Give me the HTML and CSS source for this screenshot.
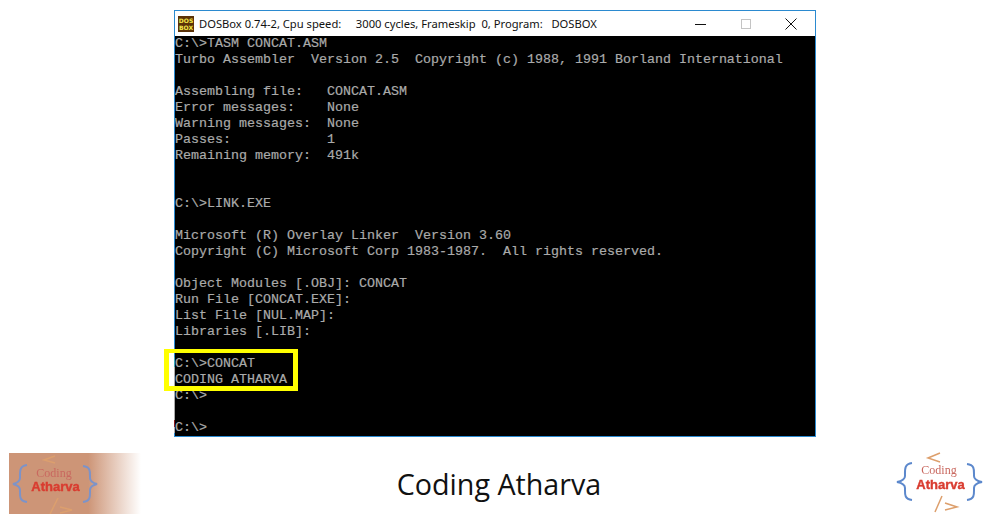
FILE: index.html
```html
<!DOCTYPE html>
<html lang="en">
<head>
    <meta charset="UTF-8">
    <meta name="viewport" content="width=device-width, initial-scale=1.0">
    <title>Coding Atharva - DOSBox</title>
    <link rel="stylesheet" href="styles.css">
</head>
<body>
    <div class="stage">
        <div class="window">
            <div class="titlebar">
                <div class="app-icon"><span>DOS</span><span>BOX</span></div>
                <div class="title">DOSBox 0.74-2, Cpu speed:     3000 cycles, Frameskip  0, Program:   DOSBOX</div>
                <div class="win-controls">
                    <svg width="12" height="12" viewBox="0 0 12 12"><path d="M0 6.500H11" stroke="#111" fill="none"/></svg>
                    <svg width="12" height="12" viewBox="0 0 12 12"><rect x="1.500" y="1.500" width="9" height="9" stroke="#c4c4c4" fill="none"/></svg>
                    <svg width="12" height="12" viewBox="0 0 12 12"><path d="M.5 .5L11.500 11.500M11.500 .5L.5 11.500" stroke="#111" fill="none"/></svg>
                </div>
            </div>
            <pre class="terminal">C:\&gt;TASM CONCAT.ASM
Turbo Assembler  Version 2.5  Copyright (c) 1988, 1991 Borland International

Assembling file:   CONCAT.ASM
Error messages:    None
Warning messages:  None
Passes:            1
Remaining memory:  491k


C:\&gt;LINK.EXE

Microsoft (R) Overlay Linker  Version 3.60
Copyright (C) Microsoft Corp 1983-1987.  All rights reserved.

Object Modules [.OBJ]: CONCAT
Run File [CONCAT.EXE]:
List File [NUL.MAP]:
Libraries [.LIB]:

C:\&gt;CONCAT
CODING ATHARVA
C:\&gt;

C:\&gt;</pre>
            <div class="edge"></div>
            <div class="highlight"></div>
        </div>
    </div>

    <div class="footer">
        <div class="logo-left">
            <svg class="logo" width="96" height="61" viewBox="0 0 96 61">
                <path d="M18 12C10 13 11 19 11 25C11 28 8 30 4 31C8 32 11 34 11 37C11 43 10 48 18 49" stroke="#7c93c9" stroke-width="2" fill="none"/>
                <path d="M74 13C82 14 81 19 81 25C81 28 84 30 88 31C84 32 81 34 81 37C81 43 82 48 74 49" stroke="#7c93c9" stroke-width="2" fill="none"/>
                <path d="M46 3L35 7L46 10" stroke="#dc9f6e" stroke-width="1.500" fill="none"/>
                <path d="M41 61L49 45M51 54L63 57L51 60" stroke="#dc9f6e" stroke-width="1.500" fill="none"/>
                <text class="logo-small" x="45" y="24" fill="#c9685f">Coding</text>
                <text class="logo-big" x="46.500" y="38" fill="#d93c30">Atharva</text>
            </svg>
        </div>
        <div class="channel">Coding Atharva</div>
        <svg class="logo" width="95" height="67" viewBox="0 0 95 67">
            <path d="M22 13C14 14 15 20 15 26C15 29 12 31 7 32C12 33 15 35 15 38C15 44 14 49 22 50" stroke="#5c88cc" stroke-width="2" fill="none"/>
            <path d="M77 14C85 15 84 20 84 26C84 29 87 31 92 32C87 33 84 35 84 38C84 44 85 49 77 50" stroke="#5c88cc" stroke-width="2" fill="none"/>
            <path d="M50 3L38 8L50 12" stroke="#dd9f6c" stroke-width="1.500" fill="none"/>
            <path d="M45 62L52 46M55 53L67 57L55 60" stroke="#dd9f6c" stroke-width="1.500" fill="none"/>
            <text class="logo-small" x="49" y="24" fill="#c9685f">Coding</text>
            <text class="logo-big" x="50.500" y="39" fill="#d93c30">Atharva</text>
        </svg>
    </div>
</body>
</html>
```

FILE: styles.css
```css
body {
    margin: 0;
    background: #ffffff;
    font-family: "Open Sans", sans-serif;
    overflow: hidden;
}

.stage {
    display: flex;
    justify-content: center;
    padding-top: 10px;
}

.window {
    position: relative;
    width: 640px;
    border: 1px solid #2b8ad0;
}

.titlebar {
    display: flex;
    align-items: center;
    height: 25px;
    padding-left: 3px;
    background: #ffffff;
}

.app-icon {
    display: flex;
    flex-direction: column;
    justify-content: center;
    align-items: center;
    width: 16px;
    height: 16px;
    background: #5b3208;
    color: #f4e94a;
    font-family: "DejaVu Sans", sans-serif;
    font-size: 6px;
    font-weight: bold;
    line-height: 7px;
}

.title {
    flex: 1;
    margin-left: 5px;
    font-family: "Noto Sans", sans-serif;
    font-size: 11.200px;
    color: #111111;
    white-space: pre;
}

.win-controls {
    display: flex;
    gap: 33px;
    padding-right: 18px;
}

.terminal {
    margin: 0;
    height: 400px;
    background: #000000;
    color: #aaaaaa;
    font-family: "Liberation Mono", monospace;
    font-size: 13.333px;
    line-height: 16px;
    -webkit-text-stroke: 0.2px #aaaaaa;
}

/* recolored bit of the window's left border, from the capture */
.edge {
    position: absolute;
    left: -1px;
    top: 346px;
    width: 1px;
    height: 76px;
    background: linear-gradient(180deg, #3aa7b5 0 10px, #aaaaaa 10px 63px, #8a1a1a 63px 70px, #aaaaaa 70px);
}

/* yellow box drawn over the screenshot */
.highlight {
    position: absolute;
    left: -11px;
    top: 338px;
    width: 124px;
    height: 33px;
    border: 5px solid #ffff00;
    border-width: 4px 5px 5px 5px;
}

.footer {
    display: flex;
    align-items: center;
    justify-content: space-between;
    height: 67px;
    margin-top: 13px;
    padding: 0 5px 0 9px;
}

.logo-left {
    width: 132px;
    height: 61px;
    background: linear-gradient(90deg, #cd9577 0%, #cd9577 60%, #ffffff 100%);
}

.logo {
    display: block;
    filter: blur(0.4px);
}

.logo-small {
    font-family: "Liberation Serif", serif;
    font-size: 12px;
    text-anchor: middle;
}

.logo-big {
    font-family: "Liberation Sans", sans-serif;
    font-size: 13px;
    font-weight: bold;
    text-anchor: middle;
    stroke: #d93c30;
    stroke-width: 0.4px;
}

.channel {
    margin-left: -33px;
    font-size: 28.700px;
    color: #111111;
}
```
